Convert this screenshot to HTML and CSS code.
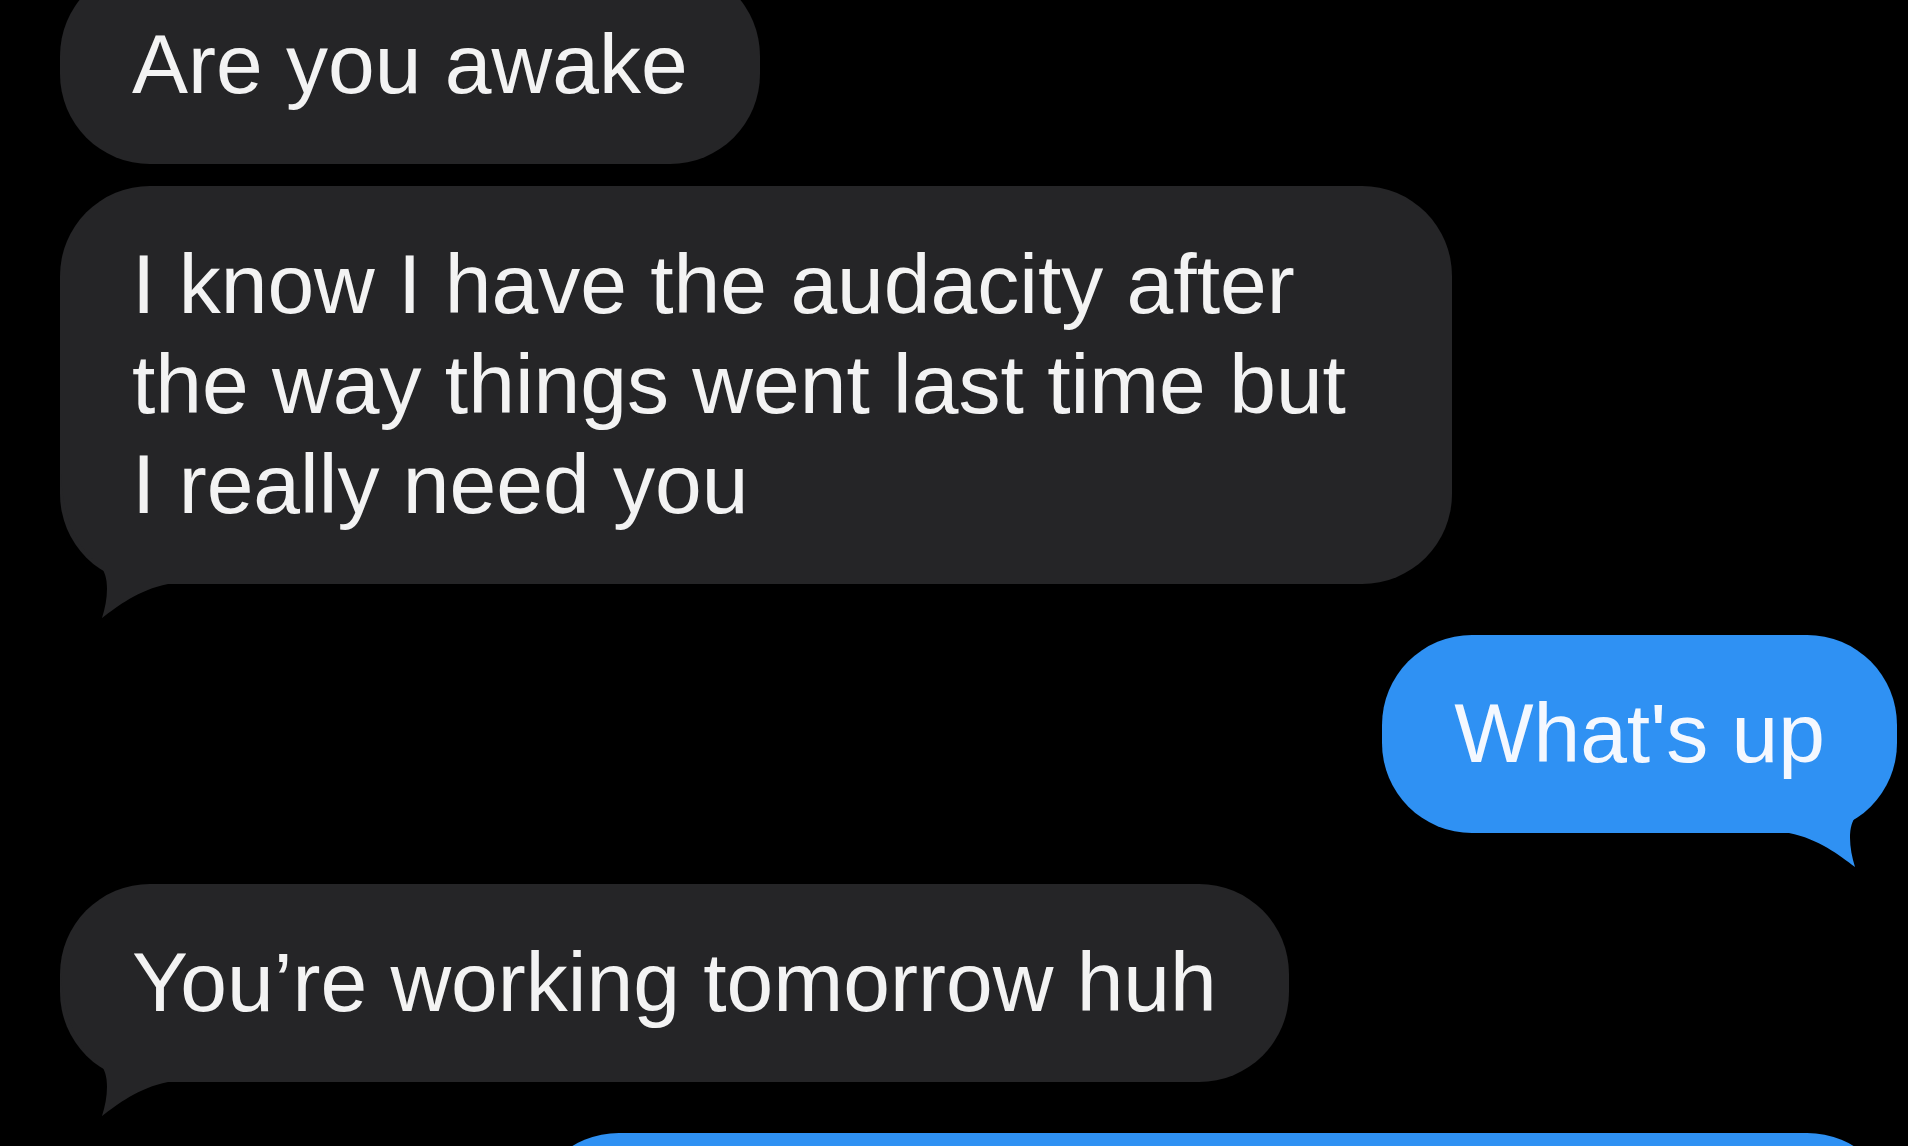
FILE: index.html
```html
<!DOCTYPE html>
<html lang="en">
<head>
<meta charset="utf-8">
<title>Messages</title>
<link rel="stylesheet" href="styles.css">
</head>
<body>
<main class="thread">
  <div class="bubble received"><span class="text">Are you awake</span></div>
  <div class="bubble received same-sender"><svg class="tail" viewBox="0 -110 120 150" aria-hidden="true"><path d="M1 -110 C3 -60 20 -35 40 -18 C50 -8 48 15 42 34 C58 22 78 6 108 0 L108 -110 Z"/></svg><span class="text">I know I have the audacity after the way things went last time but I really need you</span></div>
  <div class="bubble sent"><svg class="tail" viewBox="0 -110 120 150" aria-hidden="true"><path d="M1 -110 C3 -60 20 -35 40 -18 C50 -8 48 15 42 34 C58 22 78 6 108 0 L108 -110 Z"/></svg><span class="text">What's up</span></div>
  <div class="bubble received"><svg class="tail" viewBox="0 -110 120 150" aria-hidden="true"><path d="M1 -110 C3 -60 20 -35 40 -18 C50 -8 48 15 42 34 C58 22 78 6 108 0 L108 -110 Z"/></svg><span class="text">You’re working tomorrow huh</span></div>
  <div class="bubble sent partial">&nbsp;</div>
</main>
</body>
</html>
```
FILE: styles.css
```css
html, body {
  margin: 0;
  padding: 0;
  background: #000;
  height: 100%;
  overflow: hidden;
}

.thread {
  display: flex;
  flex-direction: column;
  align-items: flex-start;
  margin-top: -34px;
  padding: 0 11px 0 60px;
  font-family: "Liberation Sans", Arial, sans-serif;
}

.bubble {
  position: relative;
  box-sizing: border-box;
  max-width: 1392px;
  padding: 48px 72px 50px;
  border-radius: 90px;
  font-size: 84px;
  line-height: 100px;
  color: #f3f3f3;
  margin-top: 51px;
}

.bubble:first-child {
  margin-top: 0;
}

.bubble.same-sender {
  margin-top: 22px;
}

.text {
  position: relative;
  z-index: 1;
}

.received {
  background: #252527;
  align-self: flex-start;
}

.received .tail {
  fill: #252527;
}

.sent {
  background: #2f91f3;
  color: #f4f8ff;
  align-self: flex-end;
}

.sent .tail {
  fill: #2f91f3;
  left: auto;
  right: 0;
  transform: scaleX(-1);
}

.tail {
  position: absolute;
  z-index: 0;
  left: 0;
  bottom: -40px;
  width: 120px;
  height: 150px;
  display: block;
}

.partial {
  width: 1368px;
  height: 300px;
}
```
